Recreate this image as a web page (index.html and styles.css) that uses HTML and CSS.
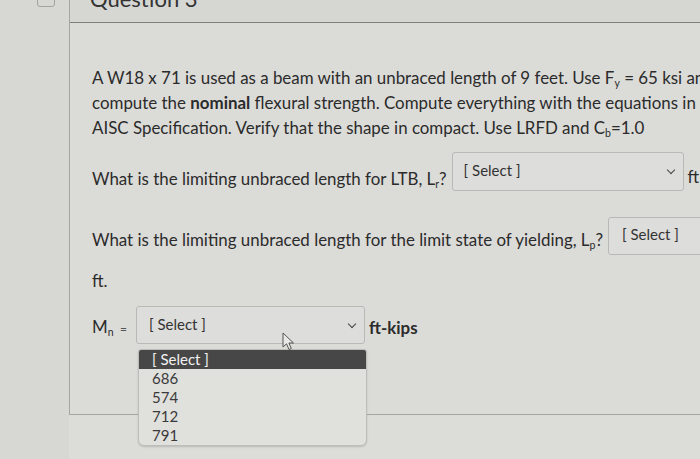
FILE: index.html
```html
<!DOCTYPE html>
<html>
<head>
<meta charset="utf-8">
<link rel="stylesheet" href="styles.css">
</head>
<body>
<div class="page">
  <div class="gutter"><div class="flag"></div></div>
  <div class="question">
    <div class="qheader"><span class="qtitle">Question 3</span></div>
    <div class="qbody">
      <p class="intro">A W18 x 71 is used as a beam with an unbraced length of 9 feet. Use F<sub>y</sub> = 65 ksi and<br>compute the <b>nominal</b> flexural strength. Compute everything with the equations in the<br>AISC Specification. Verify that the shape in compact. Use LRFD and C<sub>b</sub>=1.0</p>

      <div class="row row-lr">
        <span class="label">What is the limiting unbraced length for LTB, L<sub>r</sub>?</span>
        <div class="select sel-lr"><span>[ Select ]</span><span class="chev"></span></div>
        <span class="unit">ft</span>
      </div>

      <div class="row row-lp">
        <span class="label">What is the limiting unbraced length for the limit state of yielding, L<sub>p</sub>?</span>
        <div class="select sel-lp"><span>[ Select ]</span><span class="chev"></span></div>
      </div>
      <p class="ftline">ft.</p>

      <div class="row row-mn">
        <span class="label mn">M<sub>n</sub> <span class="eq">=</span></span>
        <div class="select sel-mn"><span>[ Select ]</span><span class="chev"></span>
          <ul class="dropdown">
            <li class="active">[ Select ]</li>
            <li>686</li>
            <li>574</li>
            <li>712</li>
            <li>791</li>
          </ul>
          <svg class="cursor" width="14" height="20" viewBox="0 0 14 20"><path d="M1 1 L1 15 L4.5 11.8 L7 17.5 L9.3 16.5 L6.9 11 L11.5 11 Z" fill="#e8e8e6" stroke="#555" stroke-width="1" stroke-linejoin="round"/></svg>
        </div>
        <span class="unit kips">ft-kips</span>
      </div>
    </div>
  </div>
</div>
</body>
</html>
```

FILE: styles.css
```css
html, body {
  margin: 0;
  padding: 0;
  overflow: hidden;
  width: 700px;
  height: 459px;
}
body {
  background: #dcdcd9;
  font-family: Lato, "Open Sans", sans-serif;
  color: #2b2b2b;
}
.page {
  display: flex;
  width: 700px;
  height: 459px;
  overflow: hidden;
}
.gutter {
  width: 69px;
  flex: none;
  background: #d7d7d3;
}
.flag {
  width: 16px;
  height: 12px;
  margin: -7px 0 0 37px;
  border: 1.5px solid #a3a3a0;
  border-radius: 3px;
}
.question {
  flex: none;
  width: 760px;
  height: 414px;
  border-left: 1px solid #a5a5a2;
  border-bottom: 1px solid #a5a5a2;
  background: #dbdbd8;
}
.qheader {
  height: 22px;
  border-bottom: 1px solid #7f7f7d;
  background: #d6d6d3;
  overflow: hidden;
  padding-left: 20px;
}
.qtitle {
  display: block;
  font-size: 22px;
  line-height: 22px;
  margin-top: -12px;
  color: #333;
}
.qbody {
  padding: 42px 0 0 22px;
}
p {
  margin: 0;
}
sub {
  font-size: 10.5px;
  vertical-align: -3px;
  line-height: 0;
}
.intro {
  font-size: 16.9px;
  line-height: 25px;
  white-space: nowrap;
}
.intro b {
  font-weight: 700;
}
.row {
  display: flex;
  align-items: flex-start;
  white-space: nowrap;
  font-size: 16.9px;
  line-height: 20px;
}
.row-lr {
  margin-top: 12px;
}
.row-lr .label {
  padding-top: 17px;
}
.select {
  position: relative;
  box-sizing: border-box;
  height: 39px;
  border: 1px solid #b9b9b6;
  border-radius: 3px;
  background: #dddddb;
  display: flex;
  align-items: center;
  padding-left: 11px;
  font-size: 15px;
  color: #333;
  flex: none;
}
.chev {
  position: absolute;
  right: 9px;
  top: 14px;
  width: 5px;
  height: 5px;
  border-right: 1.6px solid #444;
  border-bottom: 1.6px solid #444;
  transform: rotate(45deg);
}
.sel-lr {
  width: 232px;
  margin-left: 5px;
  padding-bottom: 4px;
}
.row-lr .unit {
  padding-top: 15px;
  margin-left: 4px;
}
.row-lp {
  margin-top: 26px;
}
.row-lp .label {
  padding-top: 13px;
}
.sel-lp {
  width: 232px;
  height: 38px;
  margin-left: 5px;
  padding-left: 13px;
  padding-bottom: 4px;
}
.ftline {
  font-size: 16.9px;
  line-height: 20px;
  margin-top: 16px;
}
.row-mn {
  margin-top: 15px;
}
.mn {
  padding-top: 11px;
  width: 44px;
  flex: none;
}
.mn .eq {
  font-size: 12px;
  color: #555;
  margin-left: 2px;
}
.sel-mn {
  width: 229px;
  height: 38px;
  padding-left: 12px;
  padding-bottom: 3px;
}
.row-mn .unit {
  padding-top: 12px;
  margin-left: 4px;
}
.kips {
  font-weight: 700;
}
.dropdown {
  position: absolute;
  left: 1px;
  top: 42px;
  width: 227px;
  margin: 0;
  padding: 0;
  list-style: none;
  background: #e0e0dd;
  border: 1px solid #bdbdba;
  border-radius: 3px 3px 6px 6px;
  overflow: hidden;
  box-shadow: 0 1px 2px rgba(0,0,0,0.15);
}
.dropdown li {
  height: 19px;
  line-height: 19px;
  padding-left: 13px;
  font-size: 15px;
  color: #3a3a3a;
}
.dropdown li.active {
  background: #474747;
  color: #f2f2f2;
}
.cursor {
  position: absolute;
  left: 145px;
  top: 25px;
}
```
